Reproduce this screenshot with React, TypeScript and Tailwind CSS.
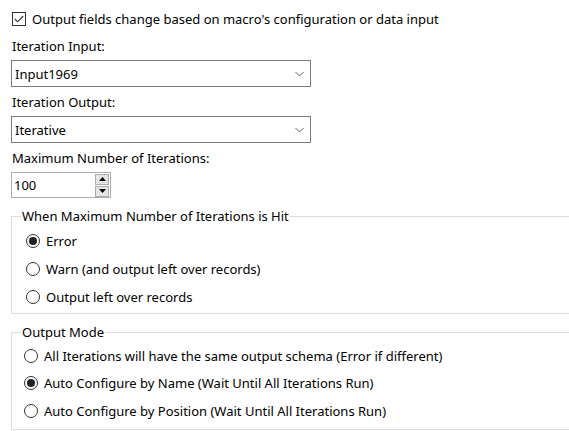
const font = { fontFamily: '"Noto Sans", "Open Sans", sans-serif' };

function Chevron() {
  return (
    <svg width="9" height="6" viewBox="0 0 9 6" className="text-[#606060]">
      <path d="M0.5 1 L4.5 5 L8.5 1" fill="none" stroke="currentColor" strokeWidth="1" />
    </svg>
  );
}

function Select({ value }: { value: string }) {
  return (
    <div className="w-[300px] h-[27px] border border-[#7a7a7a] bg-white flex items-center justify-between pl-[3px] pr-[6px]">
      <span>{value}</span>
      <Chevron />
    </div>
  );
}

function Radio({ checked, label, indent }: { checked?: boolean; label: string; indent: string }) {
  return (
    <div className={`flex items-center h-[16px] gap-[6px] ${indent}`}>
      <div className="w-[14px] h-[14px] rounded-full border border-[#333] flex items-center justify-center bg-white">
        {checked && <div className="w-[8px] h-[8px] rounded-full bg-[#222]" />}
      </div>
      <span>{label}</span>
    </div>
  );
}

function Spinner() {
  return (
    <div className="w-[100px] h-[26px] border border-[#abadb3] bg-white flex items-center justify-between pl-[2px] pr-[1px]">
      <span>100</span>
      <div className="flex flex-col gap-[1px]">
        <div className="w-[14px] h-[11px] bg-[#e5e5e5] border border-[#adadad] flex items-center justify-center">
          <svg width="7" height="4" viewBox="0 0 7 4"><path d="M3.5 0 L7 4 L0 4 Z" fill="#000" /></svg>
        </div>
        <div className="w-[14px] h-[11px] bg-[#e5e5e5] border border-[#adadad] flex items-center justify-center">
          <svg width="7" height="4" viewBox="0 0 7 4"><path d="M0 0 L7 0 L3.5 4 Z" fill="#000" /></svg>
        </div>
      </div>
    </div>
  );
}

export default function App() {
  return (
    <div className="w-[569px] h-[431px] bg-white overflow-hidden text-[13px] leading-[16px] text-black" style={font}>
      <div className="pl-[11px] pt-[12px] flex flex-col items-start">
        {/* macro options */}
        <div className="flex items-center h-[14px] gap-[6px] ml-[1px]">
          <div className="w-[14px] h-[14px] border border-[#333] flex items-center justify-center">
            <svg width="10" height="8" viewBox="0 0 10 8">
              <path d="M0.8 4 L3.6 6.8 L9.2 1" fill="none" stroke="#333" strokeWidth="1.1" />
            </svg>
          </div>
          <span>Output fields change based on macro's configuration or data input</span>
        </div>

        <div className="mt-[12px] pl-[1px]">Iteration Input:</div>
        <div className="mt-[6px]"><Select value="Input1969" /></div>

        <div className="mt-[7px] pl-[1px]">Iteration Output:</div>
        <div className="mt-[6px]"><Select value="Iterative" /></div>

        <div className="mt-[7px] pl-[1px]">Maximum Number of Iterations:</div>
        <div className="mt-[6px]"><Spinner /></div>
      </div>

      <div className="pl-[11px] mt-[10px]">
        <fieldset className="border border-r-0 border-[#dcdcdc] w-[570px] p-0">
          <legend className="ml-[9px] px-[1px] leading-[16px]">When Maximum Number of Iterations is Hit</legend>
          <div className="flex flex-col pt-[9px] pb-[8px] gap-[12px]">
            <Radio checked label="Error" indent="ml-[14px]" />
            <Radio label="Warn (and output left over records)" indent="ml-[14px]" />
            <Radio label="Output left over records" indent="ml-[14px]" />
          </div>
        </fieldset>

        <fieldset className="border border-r-0 border-[#dcdcdc] w-[570px] p-0 mt-[10px]">
          <legend className="ml-[9px] px-[1px] leading-[16px]">Output Mode</legend>
          <div className="flex flex-col pt-[8px] pb-[10px]">
            <Radio label="All Iterations will have the same output schema (Error if different)" indent="ml-[12px]" />
            <div className="mt-[11px]">
              <Radio checked label="Auto Configure by Name (Wait Until All Iterations Run)" indent="ml-[12px]" />
            </div>
            <div className="mt-[12px]">
              <Radio label="Auto Configure by Position (Wait Until All Iterations Run)" indent="ml-[12px]" />
            </div>
          </div>
        </fieldset>
      </div>
    </div>
  );
}
